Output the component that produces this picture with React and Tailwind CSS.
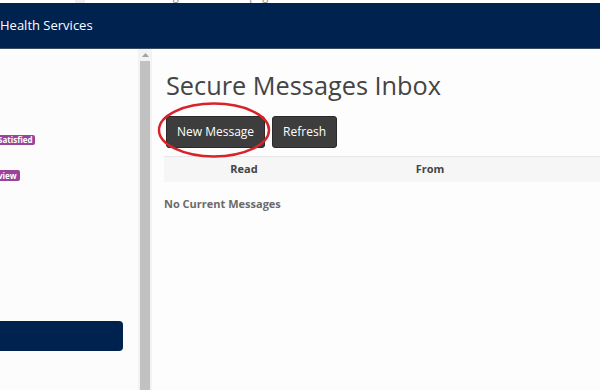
export default function App() {
  const font = { fontFamily: '"Open Sans", "Noto Sans", sans-serif' };
  return (
    <div className="w-[600px] h-[390px] overflow-hidden bg-[#fdfdfd] relative flex flex-col" style={font}>
      <div className="h-[3px] bg-white relative overflow-hidden shrink-0">
        <div className="absolute left-[75px] top-0 w-[10px] h-[3px] bg-[#eeeeee]"></div>
        <div className="absolute left-[96px] top-[-10px] text-[11px] text-[#8a8a8a] whitespace-nowrap leading-[12px]">NAU Counseling Services Webpage</div>
      </div>
      <div className="h-[46px] bg-[#00224f] flex items-center shrink-0 border-b border-[#3a4b66]">
        <span className="text-white text-[13px] ml-[0px] leading-none">Health Services</span>
      </div>
      <div className="flex flex-1 min-h-0">
        <div className="w-[138px] bg-[#fcfcfc] flex flex-col shrink-0">
          <div className="h-[86px]"></div>
          <div className="flex">
            <span className="bg-[#96459b] text-white text-[8px] font-bold leading-[10px] px-[3px] rounded-[2px] ml-[-5px]">Satisfied</span>
          </div>
          <div className="h-[25px]"></div>
          <div className="flex">
            <span className="bg-[#96459b] text-white text-[8px] font-bold leading-[11px] px-[3px] rounded-[2px] ml-[-5px]">view</span>
          </div>
          <div className="h-[140px]"></div>
          <div className="w-[123px] h-[30px] bg-[#00224f] rounded-r-[4px]"></div>
        </div>
        <div className="w-[14px] bg-[#f3f3f3] flex flex-col items-center shrink-0">
          <div className="h-[12px] flex items-center justify-center">
            <svg width="7" height="4" viewBox="0 0 7 4"><polygon points="3.5,0 7,4 0,4" fill="#a3a3a3" /></svg>
          </div>
          <div className="w-[10px] flex-1 bg-[#c1c1c1]"></div>
        </div>
        <div className="flex-1 pl-[12px] pt-[21px] relative">
          <h1 className="text-[25.3px] leading-[30px] text-[#444444] ml-[2px]">Secure Messages Inbox</h1>
          <div className="flex gap-[7px] mt-[16px] ml-[2px]">
            <button className="h-[32px] px-[10px] bg-[#3d3d3d] text-white text-[12px] rounded-[3px] border border-[#2a2a2a]">New Message</button>
            <button className="h-[32px] px-[10px] bg-[#3d3d3d] text-white text-[12px] rounded-[3px] border border-[#2a2a2a]">Refresh</button>
          </div>
          <div className="mt-[8px] border-t border-[#e6e6e6] bg-[#f6f6f6] h-[26px] flex items-center text-[11px] font-bold text-[#444444]">
            <div className="w-[160px] text-center">Read</div>
            <div className="w-[212px] text-center">From</div>
          </div>
          <div className="mt-[14px] text-[11px] font-bold text-[#6a6a6a]">No Current Messages</div>
          <svg className="absolute left-[4px] top-[52px]" width="116" height="58" viewBox="0 0 116 58">
            <ellipse cx="58" cy="29" rx="55" ry="26.5" fill="none" stroke="#d8232a" strokeWidth="2.5" />
          </svg>
        </div>
      </div>
    </div>
  );
}
